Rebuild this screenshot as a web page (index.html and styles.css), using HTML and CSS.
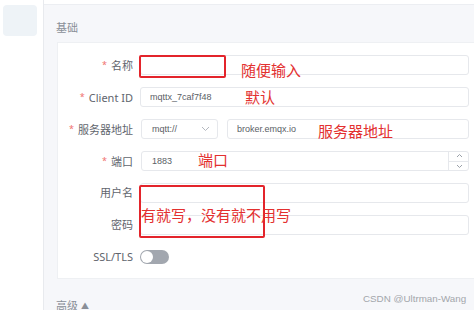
FILE: index.html
```html
<!DOCTYPE html>
<html lang="zh-CN">
<head>
    <meta charset="UTF-8">
    <meta name="viewport" content="width=device-width, initial-scale=1.0">
    <title>MQTTX 新建连接</title>
    <link rel="stylesheet" href="styles.css">
</head>
<body>
    <div class="app">
        <div class="sidebar">
            <div class="side-item"></div>
        </div>

        <div class="main">
            <div class="section-title">基础</div>

            <div class="card">
                <div class="form-grid">
                    <label class="form-label"><span class="star">*</span>名称</label>
                    <div class="field"><input type="text" class="text-input" value=""></div>

                    <label class="form-label"><span class="star">*</span>Client ID</label>
                    <div class="field"><input type="text" class="text-input" value="mqttx_7caf7f48"></div>

                    <label class="form-label"><span class="star">*</span>服务器地址</label>
                    <div class="field host-field">
                        <div class="select-box">
                            <span>mqtt://</span>
                            <svg class="chevron" width="9" height="6" viewBox="0 0 9 6"><path d="M1 1l3.5 3.5L8 1" fill="none" stroke="#b4b8bf" stroke-width="1"/></svg>
                        </div>
                        <input type="text" class="text-input" value="broker.emqx.io">
                    </div>

                    <label class="form-label"><span class="star">*</span>端口</label>
                    <div class="field number-field">
                        <input type="text" class="text-input" value="1883">
                        <div class="stepper">
                            <div class="step"><svg width="7" height="5" viewBox="0 0 7 5"><path d="M1 4l2.5-2.5L6 4" fill="none" stroke="#9aa0a8" stroke-width="1"/></svg></div>
                            <div class="step"><svg width="7" height="5" viewBox="0 0 7 5"><path d="M1 1l2.5 2.5L6 1" fill="none" stroke="#9aa0a8" stroke-width="1"/></svg></div>
                        </div>
                    </div>

                    <label class="form-label">用户名</label>
                    <div class="field"><input type="text" class="text-input" value=""></div>

                    <label class="form-label">密码</label>
                    <div class="field"><input type="password" class="text-input" value=""></div>

                    <label class="form-label">SSL/TLS</label>
                    <div class="field"><span class="switch"><span class="knob"></span></span></div>
                </div>
            </div>

            <div class="section-title more">高级 <span class="caret">▲</span></div>
        </div>
    </div>

    <!-- annotations drawn over the screenshot -->
    <div class="mark box-name"></div>
    <div class="mark box-user"></div>
    <div class="note note-name">随便输入</div>
    <div class="note note-id">默认</div>
    <div class="note note-host">服务器地址</div>
    <div class="note note-port">端口</div>
    <div class="note note-user">有就写，没有就不用写</div>

    <div class="watermark">CSDN @Ultrman-Wang</div>
</body>
</html>
```

FILE: styles.css
```css
body {
    margin: 0;
    font-family: "Noto Sans", "Noto Sans CJK SC", sans-serif;
    background: #fff;
    overflow: hidden;
}
.app {
    display: flex;
    height: 310px;
    width: 474px;
    overflow: hidden;
}
.sidebar {
    width: 44px;
    flex-shrink: 0;
    border-right: 1px solid #e8eaee;
    padding: 5px 0 0 3px;
    box-sizing: border-box;
}
.side-item {
    width: 34px;
    height: 31px;
    background: #eef3f7;
    border-radius: 4px;
}
.main {
    flex: 1;
    margin-top: 4px;
    border-top: 1px solid #eceef2;
    background: #f6f7fa;
}
.section-title {
    padding: 12px 0 0 12px;
    height: 22px;
    line-height: 22px;
    font-size: 11px;
    color: #8a8f98;
    margin-bottom: 3px;
}
.section-title.more {
    padding-top: 16px;
}
.caret {
    font-size: 8px;
    color: #8a8f98;
    vertical-align: 1px;
}
.card {
    margin-left: 13px;
    background: #fff;
    border: 1px solid #eef0f3;
    border-right: none;
    padding: 12px 5px 11px 0;
}
.form-grid {
    display: grid;
    grid-template-columns: 75px 1fr;
    column-gap: 7px;
    row-gap: 12px;
    grid-auto-rows: 20px;
    align-items: center;
}
.form-label {
    text-align: right;
    font-size: 11px;
    color: #61656d;
    line-height: 20px;
    white-space: nowrap;
}
.star {
    color: #f0706e;
    font-size: 9px;
    margin-right: 4px;
    vertical-align: 2px;
}
.field {
    display: flex;
    height: 20px;
}
.text-input {
    flex: 1;
    min-width: 0;
    height: 20px;
    box-sizing: border-box;
    border: 1px solid #e6e8ec;
    border-radius: 3px;
    padding: 0 9px;
    font-family: "Liberation Sans", Arial, sans-serif;
    font-size: 9px;
    color: #5a5e66;
    background: #fff;
    outline: none;
}
.host-field {
    gap: 9px;
    padding-left: 1px;
}
.select-box {
    width: 77px;
    height: 20px;
    box-sizing: border-box;
    border: 1px solid #e6e8ec;
    border-radius: 3px;
    display: flex;
    align-items: center;
    justify-content: space-between;
    padding: 0 7px 0 10px;
    font-family: "Liberation Sans", Arial, sans-serif;
    font-size: 9px;
    color: #5a5e66;
}
.number-field {
    position: relative;
    padding-left: 1px;
}
.number-field .text-input {
    padding-left: 10px;
}
.stepper {
    position: absolute;
    right: 0;
    top: 0;
    width: 20px;
    height: 20px;
    border-left: 1px solid #e6e8ec;
    display: flex;
    flex-direction: column;
}
.step {
    flex: 1;
    display: flex;
    align-items: center;
    justify-content: center;
}
.step + .step {
    border-top: 1px solid #e6e8ec;
}
.switch {
    width: 29px;
    height: 14px;
    border-radius: 7px;
    background: #a2a7af;
    margin-top: 3px;
    position: relative;
}
.knob {
    position: absolute;
    left: 1px;
    top: 1px;
    width: 12px;
    height: 12px;
    border-radius: 50%;
    background: #fff;
}
.mark {
    position: absolute;
    border: 2px solid #e3242b;
    border-radius: 2px;
    box-sizing: border-box;
}
.box-name {
    left: 139px;
    top: 55px;
    width: 87px;
    height: 23px;
}
.box-user {
    left: 139px;
    top: 185px;
    width: 126px;
    height: 53px;
}
.note {
    position: absolute;
    font-family: "Noto Sans CJK SC", sans-serif;
    font-size: 15px;
    line-height: 15px;
    color: #e3302f;
    white-space: nowrap;
}
.note-name { left: 241px; top: 62px; }
.note-id { left: 245px; top: 89px; }
.note-host { left: 318px; top: 123px; }
.note-port { left: 198px; top: 152px; }
.note-user { left: 141px; top: 207px; }
.watermark {
    position: absolute;
    left: 363px;
    top: 293px;
    font-family: "Liberation Sans", Arial, sans-serif;
    font-size: 9.8px;
    color: #a3a6ab;
}
```
